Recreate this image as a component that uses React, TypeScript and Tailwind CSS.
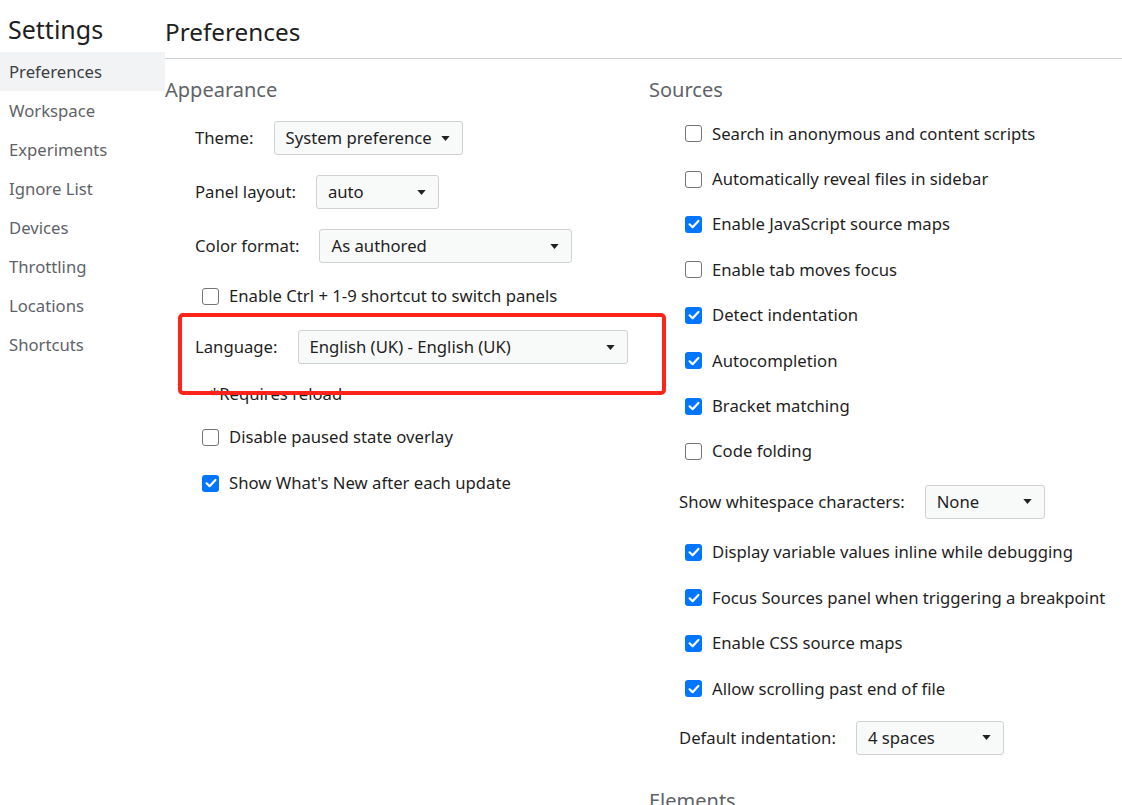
import React from "react";

const sidebarItems = [
  "Preferences",
  "Workspace",
  "Experiments",
  "Ignore List",
  "Devices",
  "Throttling",
  "Locations",
  "Shortcuts",
];

function Checkbox({ checked }: { checked: boolean }) {
  if (checked) {
    return (
      <span className="flex h-[17px] w-[17px] shrink-0 items-center justify-center rounded-[3px] bg-[#0075ff]">
        <svg viewBox="0 0 16 16" className="h-4 w-4">
          <path
            d="M3.6 8.3 L6.6 11.2 L12.4 4.9"
            fill="none"
            stroke="white"
            strokeWidth="2.2"
            strokeLinecap="round"
            strokeLinejoin="round"
          />
        </svg>
      </span>
    );
  }
  return (
    <span className="h-[17px] w-[17px] shrink-0 rounded-[3px] border-[1.5px] border-[#767676] bg-white" />
  );
}

function CheckRow({
  label,
  checked,
  className,
}: {
  label: string;
  checked: boolean;
  className: string;
}) {
  return (
    <div className={`flex items-center gap-[10px] ${className}`}>
      <Checkbox checked={checked} />
      <span className="text-[#1f1f1f]">{label}</span>
    </div>
  );
}

function Select({ value, width }: { value: string; width: string }) {
  return (
    <div
      className={`flex h-[34px] items-center justify-between rounded-[3px] border border-[#cfd1d2] bg-[#f8f9f9] pl-[11px] pr-[12px] ${width}`}
    >
      <span className="text-[#1f1f1f]">{value}</span>
      <svg viewBox="0 0 10 6" className="h-[5px] w-[9px]">
        <path d="M0 0 H10 L5 6 Z" fill="#202124" />
      </svg>
    </div>
  );
}

function SelectRow({
  label,
  value,
  width,
  className,
}: {
  label: string;
  value: string;
  width: string;
  className: string;
}) {
  return (
    <div className={`flex items-center gap-5 pl-[30px] ${className}`}>
      <span className="text-[#1f1f1f]">{label}</span>
      <Select value={value} width={width} />
    </div>
  );
}

export default function App() {
  return (
    <div
      className="relative flex h-[805px] w-[1122px] overflow-hidden bg-white text-[16.7px] leading-[22px]"
      style={{ fontFamily: '"Noto Sans", "Open Sans", sans-serif' }}
    >
      {/* Sidebar */}
      <aside className="w-[165px] shrink-0">
        <div className="flex h-[52px] items-center pl-2 pt-[6px] text-[25px] text-[#1f1f1f]">
          Settings
        </div>
        <nav className="flex flex-col">
          {sidebarItems.map((item, i) => (
            <div
              key={item}
              className={`flex h-[39px] items-center pl-[9px] ${
                i === 0 ? "bg-[#f1f3f4] text-[#3c4043]" : "text-[#5f6368]"
              }`}
            >
              {item}
            </div>
          ))}
        </nav>
      </aside>

      {/* Main */}
      <main className="flex min-w-0 flex-1 flex-col">
        <header className="flex h-[59px] shrink-0 items-center border-b border-[#cacdd1] text-[24.3px] text-[#1f1f1f]">
          <span className="pt-[6px]">Preferences</span>
        </header>

        <div className="flex">
          {/* Appearance */}
          <section className="w-[484px] shrink-0">
            <h2 className="mt-[17px] mb-[7px] text-[20px] leading-[28px] text-[#5f6368]">
              Appearance
            </h2>
            <SelectRow label="Theme:" value="System preference" width="w-[189px]" className="h-[54px]" />
            <SelectRow label="Panel layout:" value="auto" width="w-[123px]" className="h-[54px]" />
            <SelectRow label="Color format:" value="As authored" width="w-[253px]" className="h-[54px]" />
            <CheckRow
              label="Enable Ctrl + 1-9 shortcut to switch panels"
              checked={false}
              className="h-[46px] pl-[37px]"
            />
            <SelectRow
              label="Language:"
              value="English (UK) - English (UK)"
              width="w-[330px]"
              className="h-[56px]"
            />
            <div className="flex h-[38px] items-center pl-[45px] text-[#1f1f1f]">
              *Requires reload
            </div>
            <CheckRow label="Disable paused state overlay" checked={false} className="h-[48px] pl-[37px]" />
            <CheckRow
              label="Show What's New after each update"
              checked={true}
              className="h-[44px] pl-[37px]"
            />
          </section>

          {/* Sources */}
          <section className="min-w-0 flex-1 whitespace-nowrap">
            <h2 className="mt-[17px] mb-[7px] text-[20px] leading-[28px] text-[#5f6368]">
              Sources
            </h2>
            <CheckRow label="Search in anonymous and content scripts" checked={false} className="h-[45.4px] pl-[36px]" />
            <CheckRow label="Automatically reveal files in sidebar" checked={false} className="h-[45.4px] pl-[36px]" />
            <CheckRow label="Enable JavaScript source maps" checked={true} className="h-[45.4px] pl-[36px]" />
            <CheckRow label="Enable tab moves focus" checked={false} className="h-[45.4px] pl-[36px]" />
            <CheckRow label="Detect indentation" checked={true} className="h-[45.4px] pl-[36px]" />
            <CheckRow label="Autocompletion" checked={true} className="h-[45.4px] pl-[36px]" />
            <CheckRow label="Bracket matching" checked={true} className="h-[45.4px] pl-[36px]" />
            <CheckRow label="Code folding" checked={false} className="h-[45.4px] pl-[36px]" />
            <SelectRow
              label="Show whitespace characters:"
              value="None"
              width="w-[120px]"
              className="h-[55.6px]"
            />
            <CheckRow
              label="Display variable values inline while debugging"
              checked={true}
              className="h-[45.4px] pl-[36px]"
            />
            <CheckRow
              label="Focus Sources panel when triggering a breakpoint"
              checked={true}
              className="h-[45.4px] pl-[36px]"
            />
            <CheckRow label="Enable CSS source maps" checked={true} className="h-[45.4px] pl-[36px]" />
            <CheckRow label="Allow scrolling past end of file" checked={true} className="h-[45.4px] pl-[36px]" />
            <SelectRow
              label="Default indentation:"
              value="4 spaces"
              width="w-[148px]"
              className="h-[53px]"
            />
            <h2 className="mt-[23px] text-[20px] leading-[28px] text-[#5f6368]">Elements</h2>
          </section>
        </div>
      </main>

      {/* Annotation box */}
      <div className="pointer-events-none absolute left-[178px] top-[313px] h-[82px] w-[488px] rounded-[5px] border-4 border-[#ff2419]" />
    </div>
  );
}
